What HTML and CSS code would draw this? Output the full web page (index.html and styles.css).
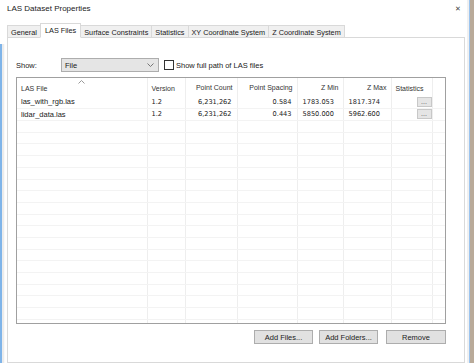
FILE: index.html
```html
<!DOCTYPE html>
<html lang="en">
<head>
    <meta charset="UTF-8">
    <title>LAS Dataset Properties</title>
    <link rel="stylesheet" href="styles.css">
</head>
<body>
    <div class="frame-left"></div>
    <div class="dialog">
        <div class="titlebar">
            <span class="title">LAS Dataset Properties</span>
            <span class="close">&#x2715;</span>
        </div>

        <div class="tabs">
            <div class="tab">General</div>
            <div class="tab active">LAS Files</div>
            <div class="tab">Surface Constraints</div>
            <div class="tab">Statistics</div>
            <div class="tab">XY Coordinate System</div>
            <div class="tab">Z Coordinate System</div>
        </div>

        <div class="panel">
            <div class="show-row">
                <span class="show-label">Show:</span>
                <div class="select">
                    <span>File</span>
                    <svg class="chevron" width="7" height="4" viewBox="0 0 7 4"><path d="M0.5 0.5 L3.5 3.5 L6.5 0.5" fill="none" stroke="#777" stroke-width="1"/></svg>
                </div>
                <span class="checkbox"></span>
                <span class="check-label">Show full path of LAS files</span>
            </div>

            <div class="grid-wrap">
                <table class="grid">
                    <colgroup>
                        <col style="width:130px">
                        <col style="width:38px">
                        <col style="width:52px">
                        <col style="width:60px">
                        <col style="width:46px">
                        <col style="width:48px">
                        <col style="width:41px">
                        <col style="width:13px">
                    </colgroup>
                    <tr class="head">
                        <th class="name-col">LAS File<svg class="sort" width="7" height="4" viewBox="0 0 7 4"><path d="M0.5 3.5 L3.5 0.5 L6.5 3.5" fill="none" stroke="#999" stroke-width="1"/></svg></th>
                        <th>Version</th>
                        <th class="num">Point Count</th>
                        <th class="num">Point Spacing</th>
                        <th class="num">Z Min</th>
                        <th class="num">Z Max</th>
                        <th>Statistics</th>
                        <th></th>
                    </tr>
                    <tr class="data">
                        <td>las_with_rgb.las</td>
                        <td class="mono">1.2</td>
                        <td class="mono num">6,231,262</td>
                        <td class="mono num">0.584</td>
                        <td class="mono z">1783.053</td>
                        <td class="mono z">1817.374</td>
                        <td class="stat"><span class="dots">...</span></td>
                        <td></td>
                    </tr>
                    <tr class="data">
                        <td>lidar_data.las</td>
                        <td class="mono">1.2</td>
                        <td class="mono num">6,231,262</td>
                        <td class="mono num">0.443</td>
                        <td class="mono z">5850.000</td>
                        <td class="mono z">5962.600</td>
                        <td class="stat"><span class="dots">...</span></td>
                        <td></td>
                    </tr>
                    <tr><td></td><td></td><td></td><td></td><td></td><td></td><td></td><td></td></tr>
                    <tr><td></td><td></td><td></td><td></td><td></td><td></td><td></td><td></td></tr>
                    <tr><td></td><td></td><td></td><td></td><td></td><td></td><td></td><td></td></tr>
                    <tr><td></td><td></td><td></td><td></td><td></td><td></td><td></td><td></td></tr>
                    <tr><td></td><td></td><td></td><td></td><td></td><td></td><td></td><td></td></tr>
                    <tr><td></td><td></td><td></td><td></td><td></td><td></td><td></td><td></td></tr>
                    <tr><td></td><td></td><td></td><td></td><td></td><td></td><td></td><td></td></tr>
                    <tr><td></td><td></td><td></td><td></td><td></td><td></td><td></td><td></td></tr>
                    <tr><td></td><td></td><td></td><td></td><td></td><td></td><td></td><td></td></tr>
                    <tr><td></td><td></td><td></td><td></td><td></td><td></td><td></td><td></td></tr>
                    <tr><td></td><td></td><td></td><td></td><td></td><td></td><td></td><td></td></tr>
                    <tr><td></td><td></td><td></td><td></td><td></td><td></td><td></td><td></td></tr>
                    <tr><td></td><td></td><td></td><td></td><td></td><td></td><td></td><td></td></tr>
                    <tr><td></td><td></td><td></td><td></td><td></td><td></td><td></td><td></td></tr>
                    <tr><td></td><td></td><td></td><td></td><td></td><td></td><td></td><td></td></tr>
                    <tr><td></td><td></td><td></td><td></td><td></td><td></td><td></td><td></td></tr>
                    <tr><td></td><td></td><td></td><td></td><td></td><td></td><td></td><td></td></tr>
                    <tr><td></td><td></td><td></td><td></td><td></td><td></td><td></td><td></td></tr>
                </table>
            </div>

            <div class="buttons">
                <button class="btn-files">Add Files...</button>
                <button class="btn-folders">Add Folders...</button>
                <button class="btn-remove">Remove</button>
            </div>
        </div>
    </div>
    <div class="frame-right"></div>
</body>
</html>
```

FILE: styles.css
```css
html, body {
    height: 100%;
}
body {
    margin: 0;
    display: flex;
    overflow: hidden;
    background-color: #fff;
    font-family: "Liberation Sans", Arial, sans-serif;
    font-size: 7.5px;
    color: #1a1a1a;
}
.frame-left {
    width: 5px;
    margin-top: 44px;
    background: linear-gradient(to right, #7fb4e9 0 2px, #ececec 2px 4px, #fafafa 4px);
}
.frame-right {
    width: 8px;
    background: linear-gradient(to right, #fff 0 1px, #f0f0f0 1px 3px, #9cc4ee 3px 4px, #b9aa99 4px);
}
.dialog {
    flex: 1;
    padding-left: 2px;
    display: flex;
    flex-direction: column;
}
.titlebar {
    height: 23px;
    display: flex;
    align-items: flex-start;
    justify-content: space-between;
    padding-top: 4px;
    box-sizing: border-box;
}
.title {
    font-size: 8px;
    color: #222;
}
.close {
    font-size: 7px;
    color: #444;
    margin-right: 5px;
    margin-top: 1px;
}
.tabs {
    display: flex;
    align-items: flex-end;
    height: 15px;
    margin-bottom: -1px;
    position: relative;
    z-index: 1;
}
.tab {
    height: 13px;
    line-height: 13px;
    padding: 0 3px;
    background-color: #f0f0f0;
    border: 1px solid #d9d9d9;
    border-left: none;
    box-sizing: border-box;
    color: #1a1a1a;
    white-space: nowrap;
    font-size: 7.3px;
}
.tab:first-child {
    border-left: 1px solid #d9d9d9;
}
.tab.active {
    height: 15px;
    padding: 0 4px;
    background-color: #fff;
    border-bottom-color: #fff;
    border-left: 1px solid #d9d9d9;
    margin-left: -1px;
}
.panel {
    flex: 1;
    width: 458px;
    border: 1px solid #d9d9d9;
    box-sizing: border-box;
    padding: 20px 18px 0 8px;
}
.show-row {
    display: flex;
    align-items: center;
    height: 14px;
}
.show-label {
    width: 45px;
}
.select {
    width: 98px;
    height: 14px;
    box-sizing: border-box;
    border: 1px solid #adadad;
    background-color: #e5e5e5;
    display: flex;
    align-items: center;
    justify-content: space-between;
    padding: 0 4px 0 3px;
}
.checkbox {
    width: 10px;
    height: 10px;
    box-sizing: border-box;
    border: 1px solid #333;
    background-color: #fff;
    margin-left: 5px;
    margin-right: 2px;
}
.grid-wrap {
    margin-top: 5px;
    height: 247px;
    border: 1px solid #a0a0a0;
    box-sizing: border-box;
    overflow: hidden;
}
.grid {
    table-layout: fixed;
    border-collapse: collapse;
    width: 428px;
}
.grid th, .grid td {
    height: 11.7px;
    padding: 0 0 0 4px;
    border-right: 1px solid #eeeeee;
    border-bottom: 1px solid #f3f3f3;
    white-space: nowrap;
    overflow: hidden;
    text-align: left;
    font-weight: normal;
    box-sizing: border-box;
}
.grid th {
    height: 18px;
    color: #333;
    font-size: 7px;
    border-bottom: none;
    padding-top: 2px;
}
.grid .name-col {
    position: relative;
}
.sort {
    position: absolute;
    left: 61px;
    top: 2px;
}
.grid tr.data td {
    height: 12.3px;
}
.grid .num {
    text-align: right;
    padding: 0 5px 0 0;
}
.grid th.num {
    padding-right: 4px;
}
.grid td.z {
    padding-left: 5px;
}
.mono {
    font-family: "DejaVu Sans", Verdana, sans-serif;
    font-size: 6.6px;
}
.grid td.stat {
    text-align: right;
    padding: 0;
}
.dots {
    display: inline-block;
    width: 15px;
    height: 10px;
    line-height: 8px;
    text-align: center;
    background-color: #e5e5e5;
    border: 1px solid #c8c8c8;
    box-sizing: border-box;
    color: #555;
    font-size: 7px;
}
.buttons {
    display: flex;
    justify-content: flex-end;
    margin-top: 6px;
}
button {
    height: 14px;
    padding: 0;
    background-color: #e1e1e1;
    border: 1px solid #adadad;
    font-family: "Liberation Sans", Arial, sans-serif;
    font-size: 7.5px;
    color: #222;
    width: 60px;
}
.btn-files {
    width: 59px;
}
.btn-folders {
    width: 59px;
    margin-left: 6px;
}
.btn-remove {
    margin-left: 8px;
}
```
